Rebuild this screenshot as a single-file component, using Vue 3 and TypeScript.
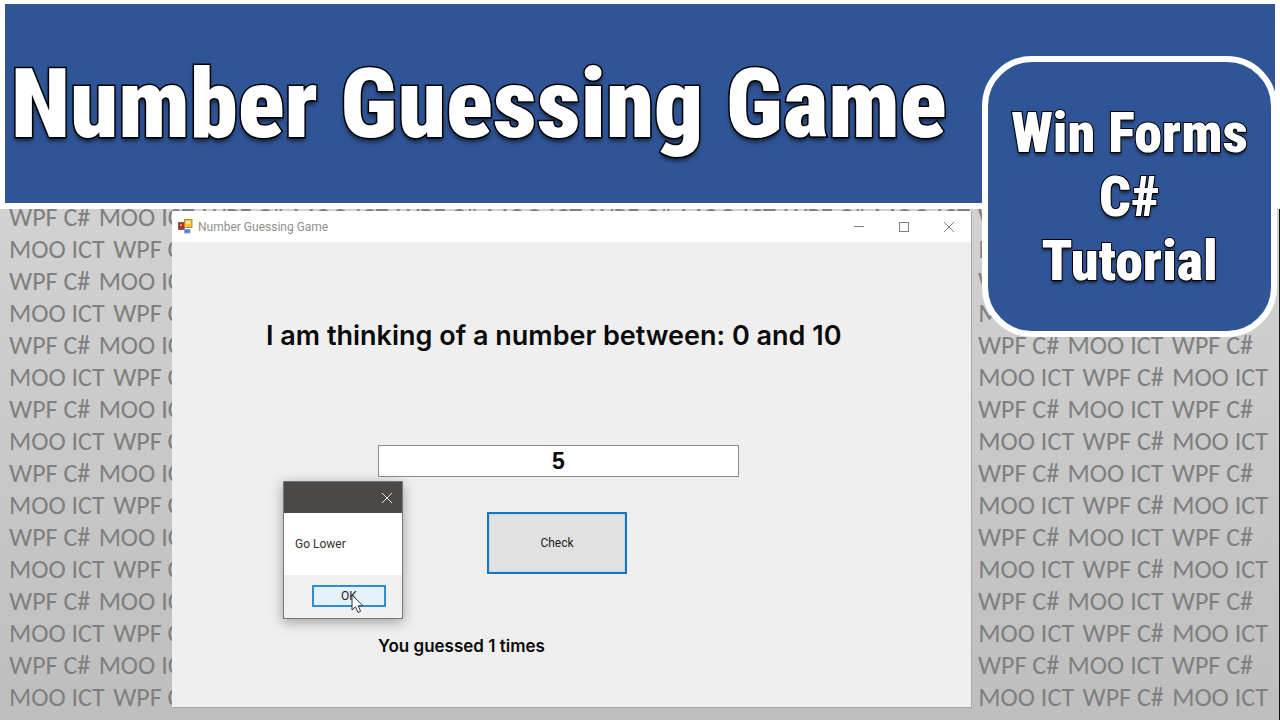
<script setup lang="ts">
import { ref } from 'vue'

const rows: string[][] = Array.from({ length: 16 }, (_, i) =>
  Array.from({ length: 13 }, (_, j) => ((i + j) % 2 === 0 ? 'WPF C#' : 'MOO ICT')),
)

const badgeLines: string[] = ['Win Forms', 'C#', 'Tutorial']
const guess = ref<string>('5')
const attempts = ref<number>(1)
</script>

<template>
  <main class="page">
    <header class="banner">
      <h1 class="banner-title">Number Guessing Game</h1>
    </header>

    <section class="stage">
      <div class="pattern" aria-hidden="true">
        <div v-for="(row, r) in rows" :key="r" class="pattern-row">
          <span v-for="(word, c) in row" :key="c">{{ word }}</span>
        </div>
      </div>

      <div class="window">
        <div class="titlebar">
          <svg class="app-icon" viewBox="0 0 15 15" aria-hidden="true">
            <rect x="0.5" y="3.5" width="6" height="7" fill="#a8362c" stroke="#8f5a50" />
            <rect x="2" y="5" width="2" height="2" fill="#e08a78" />
            <rect x="6.5" y="0.5" width="7.500" height="8" fill="#f6c540" stroke="#b58a35" />
            <rect x="8" y="2" width="4" height="3" fill="#fdeaa0" />
            <rect x="6.500" y="10.500" width="5.500" height="3.500" fill="#4d7ce0" stroke="#8ba6dc" />
          </svg>
          <span class="titlebar-text">Number Guessing Game</span>
          <div class="controls">
            <button type="button" aria-label="Minimize">
              <svg viewBox="0 0 12 12"><path d="M1 5.500H11" /></svg>
            </button>
            <button type="button" aria-label="Maximize">
              <svg viewBox="0 0 12 12"><rect x="1.500" y="1.500" width="9" height="9" /></svg>
            </button>
            <button type="button" aria-label="Close">
              <svg viewBox="0 0 12 12"><path d="M1 1L11 11M11 1L1 11" /></svg>
            </button>
          </div>
        </div>

        <form class="game" @submit.prevent>
          <label class="question" for="guess">I am thinking of a number between: 0 and 10</label>
          <input id="guess" v-model="guess" class="guess" type="text" />
          <button class="check" type="submit">Check</button>
          <p class="count">You guessed {{ attempts }} times</p>
        </form>

        <div class="dialog" role="dialog" aria-label="Result">
          <div class="dialog-bar">
            <button type="button" aria-label="Close dialog">
              <svg viewBox="0 0 12 12"><path d="M1 1L11 11M11 1L1 11" /></svg>
            </button>
          </div>
          <p class="dialog-text">Go Lower</p>
          <div class="dialog-actions">
            <button type="button" class="ok">OK</button>
          </div>
          <svg class="pointer" viewBox="0 0 13 20" aria-hidden="true">
            <path d="M1 1V16L4.500 12.800L7 18.500L9.600 17.300L7.200 11.800H12Z" />
          </svg>
        </div>
      </div>
    </section>

    <aside class="badge">
      <span v-for="line in badgeLines" :key="line">{{ line }}</span>
    </aside>
  </main>
</template>

<style>
body {
  margin: 0;
}
</style>

<style scoped>
.page {
  position: relative;
  display: flex;
  flex-direction: column;
  min-height: 100vh;
  overflow: hidden;
  font-family: "Liberation Sans", Arial, sans-serif;
}

.banner {
  box-sizing: border-box;
  display: flex;
  align-items: center;
  height: 209px;
  padding-left: 6px;
  background: #2f5597;
  border: solid #fff;
  border-width: 4px 5px 6px;
}

.banner-title {
  margin: 0;
  color: #fff;
  font-family: Impact, "Roboto Condensed", "Liberation Sans", sans-serif;
  font-size: 97px;
  font-weight: 900;
  line-height: 112px;
  white-space: nowrap;
  -webkit-text-stroke: 3px #000;
  paint-order: stroke fill;
  text-shadow: 0 4px 4px rgba(0, 0, 0, 0.6);
}

.stage {
  position: relative;
  flex: 1;
  padding-top: 2px;
  overflow: hidden;
  background: linear-gradient(#d2d2d2, #bebebe);
  border-right: 1px solid #111;
}

.pattern {
  position: absolute;
  inset: -8px 11px auto 9px;
  color: #7f7f7f;
  font-family: Carlito, Calibri, Lato, sans-serif;
  font-size: 26px;
  line-height: 32px;
  white-space: nowrap;
}

.pattern-row {
  display: flex;
  justify-content: space-between;
}

.pattern-row:nth-child(odd) {
  padding-right: 15px;
}

.window {
  position: relative;
  box-sizing: border-box;
  height: 497px;
  margin: 0 307px 0 172px;
  background: #efefef;
  border: solid #a6a6a6;
  border-width: 0 1px 1px 0;
}

.titlebar {
  display: flex;
  align-items: center;
  height: 31px;
  padding-left: 6px;
  background: #fff;
}

.app-icon {
  width: 15px;
  height: 15px;
}

.titlebar-text {
  margin-left: 5px;
  color: #8f8f8f;
  font-family: Roboto, sans-serif;
  font-size: 12px;
}

.controls {
  display: flex;
  margin-left: auto;
}

.controls button {
  width: 45px;
  height: 31px;
  padding: 0;
  background: none;
  border: 0;
}

.controls svg,
.dialog-bar svg {
  width: 12px;
  height: 12px;
  fill: none;
  stroke: #808080;
  vertical-align: middle;
}

.game {
  display: flex;
  flex-direction: column;
  align-items: flex-start;
  color: #0a0a0a;
  font-family: Inter, "Liberation Sans", sans-serif;
  font-weight: 600;
}

.question {
  margin: 78px 0 0 94px;
  font-size: 27px;
  line-height: 32px;
  white-space: nowrap;
}

.guess {
  box-sizing: border-box;
  width: 361px;
  height: 32px;
  margin: 93px 0 0 206px;
  padding: 0;
  color: #0a0a0a;
  font: 700 23px "Liberation Sans", Arial, sans-serif;
  text-align: center;
  background: #fff;
  border: 1px solid #8c8c8c;
}

.check {
  width: 140px;
  height: 62px;
  margin: 35px 0 0 315px;
  padding: 0;
  color: #222;
  font: 12px Roboto, sans-serif;
  background: #e1e1e1;
  border: 2px solid #1c75bc;
  box-shadow: inset 0 0 0 1px #b9dcf5;
}

.count {
  margin: 61px 0 0 206px;
  font-size: 17px;
  line-height: 22px;
}

.dialog {
  position: absolute;
  top: 270px;
  left: 111px;
  box-sizing: border-box;
  width: 120px;
  background: #fff;
  border: 1px solid #777;
  box-shadow: 0 3px 12px rgba(0, 0, 0, 0.35);
}

.dialog-bar {
  display: flex;
  justify-content: flex-end;
  height: 31px;
  background: #4b4947;
}

.dialog-bar button {
  width: 31px;
  padding: 0;
  background: none;
  border: 0;
}

.dialog-bar svg {
  stroke: #e6e6e6;
}

.dialog-text {
  margin: 0;
  padding-left: 11px;
  color: #333;
  font-family: Roboto, sans-serif;
  font-size: 12px;
  line-height: 62px;
}

.dialog-actions {
  display: flex;
  justify-content: flex-end;
  padding: 10px 16px 11px;
  background: #f0f0f0;
}

.ok {
  width: 74px;
  height: 22px;
  padding: 0;
  color: #222;
  font: 12px Roboto, sans-serif;
  background: #e5f1fb;
  border: 2px solid #2b8fd8;
}

.pointer {
  position: absolute;
  top: 112px;
  left: 67px;
  width: 13px;
  height: 20px;
  fill: #fff;
  stroke: #333;
}

.badge {
  position: absolute;
  top: 56px;
  right: 3px;
  box-sizing: border-box;
  display: flex;
  flex-direction: column;
  align-items: center;
  justify-content: center;
  width: 295px;
  height: 281px;
  color: #fff;
  font-family: Impact, "Roboto Condensed", "Liberation Sans", sans-serif;
  font-size: 56px;
  font-weight: 900;
  line-height: 64px;
  white-space: nowrap;
  background: #2f5597;
  border: 6px solid #fff;
  border-radius: 50px;
  -webkit-text-stroke: 2px #000;
  paint-order: stroke fill;
  text-shadow: 0 3px 3px rgba(0, 0, 0, 0.6);
}
</style>
